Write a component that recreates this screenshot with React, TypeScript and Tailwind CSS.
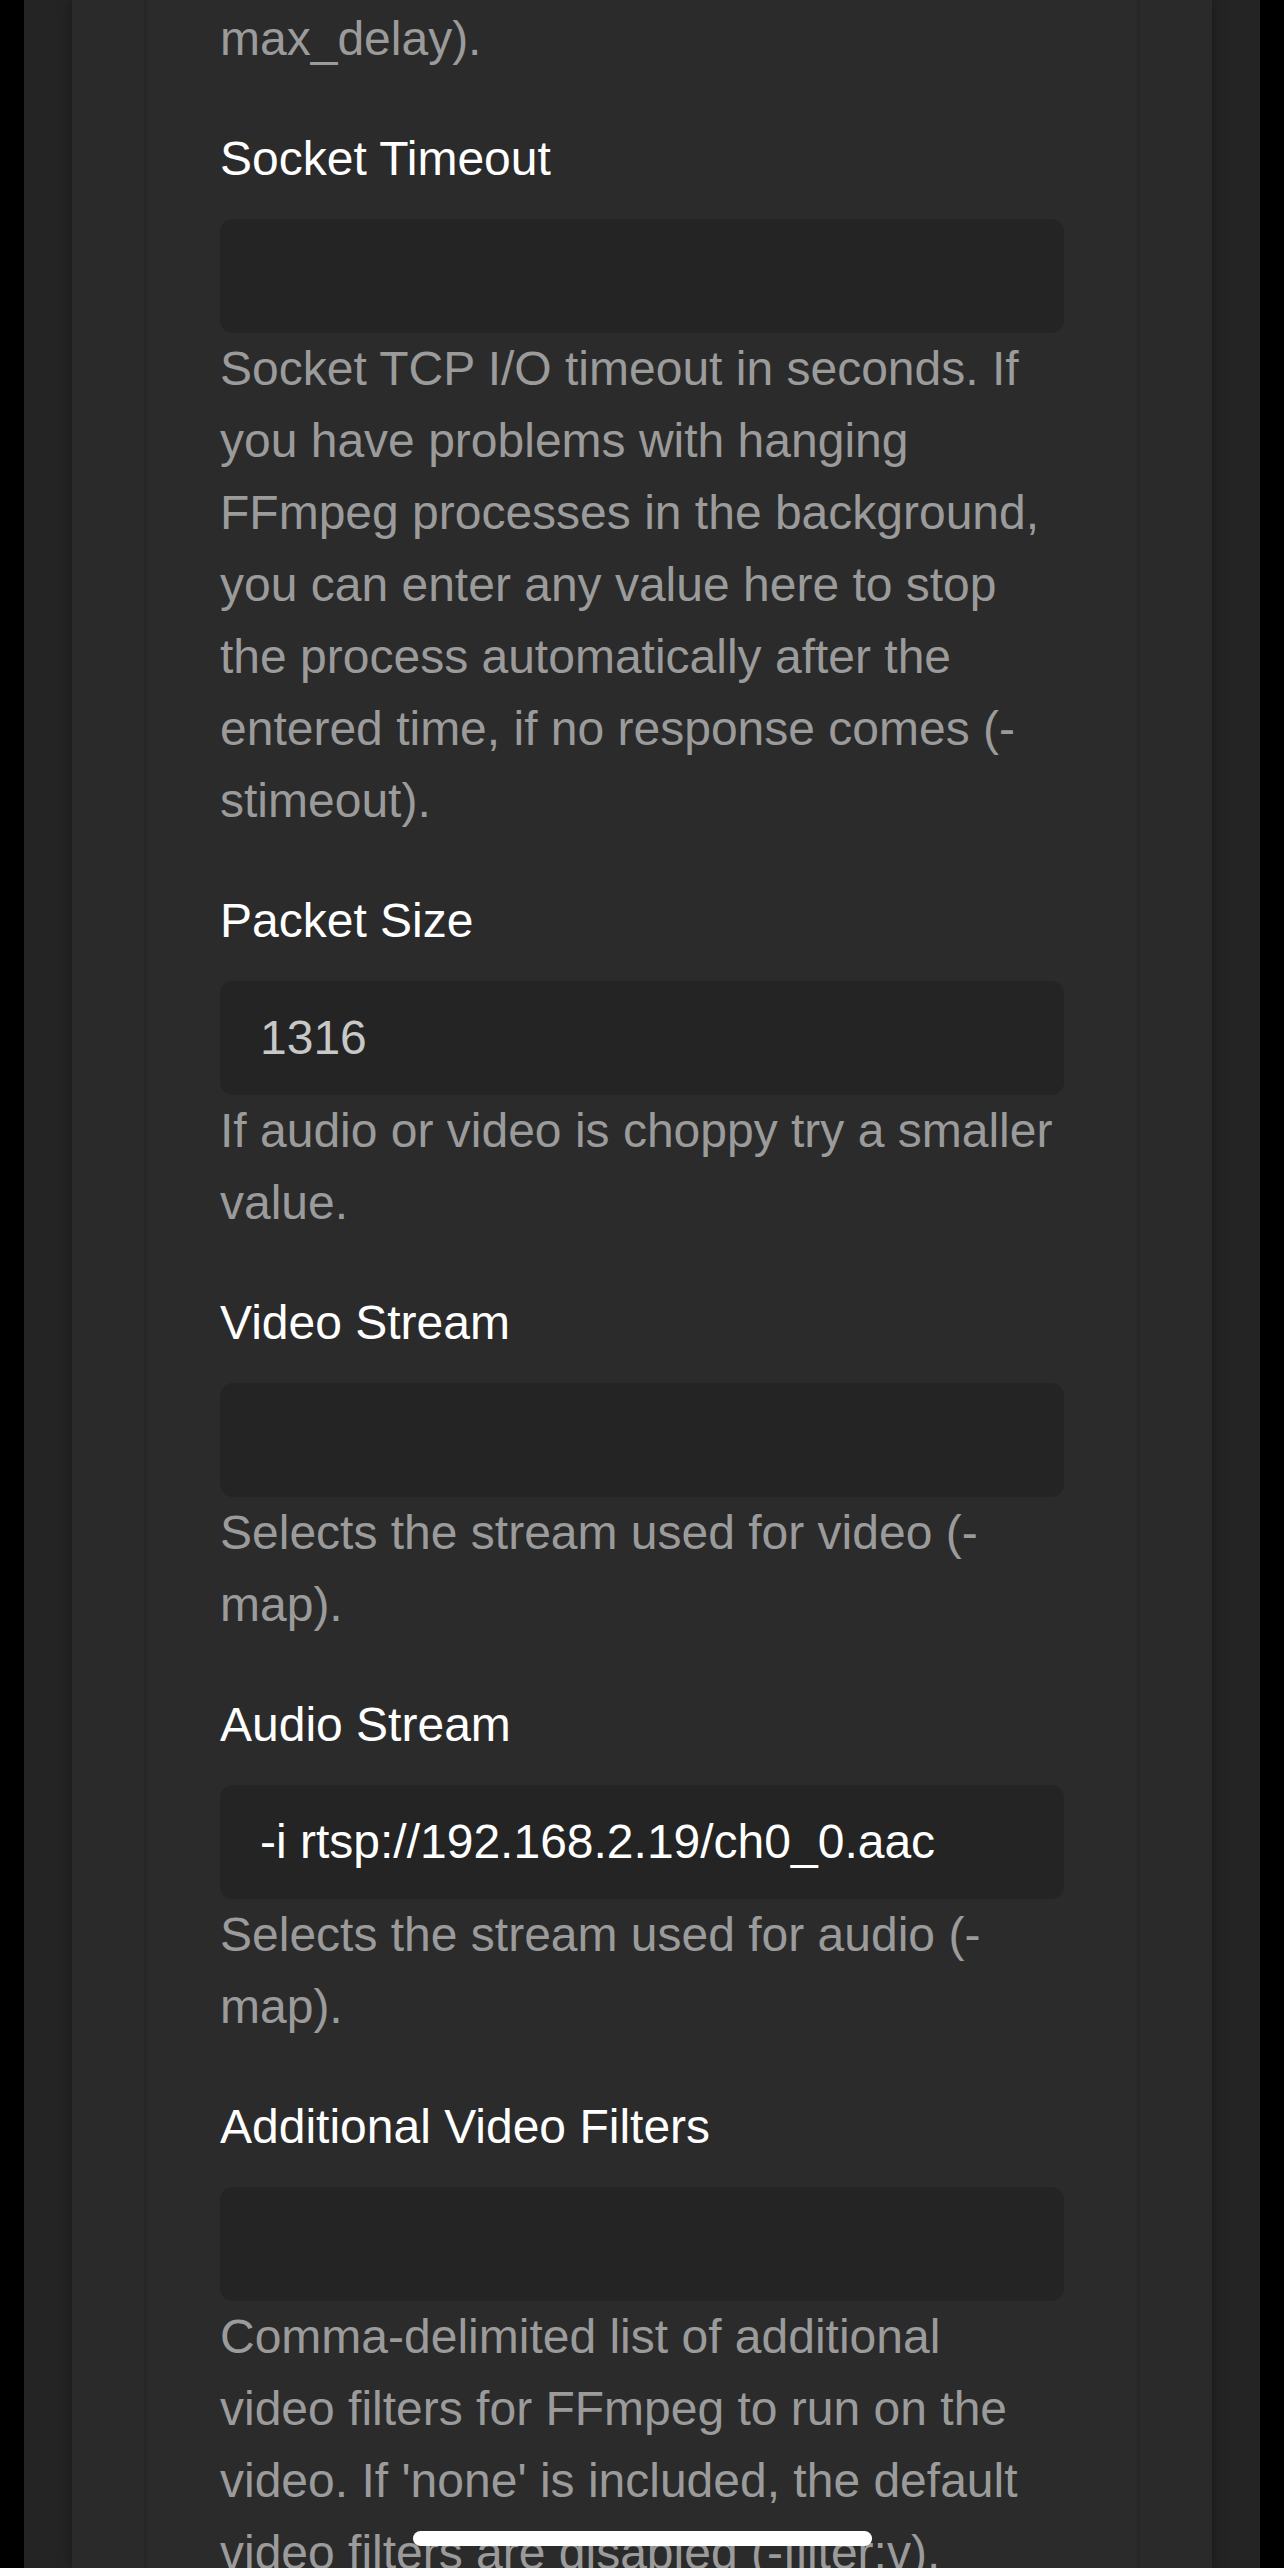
import React from 'react';

interface FieldProps {
  label: string;
  value?: string;
  valueClass?: string;
  lines: string[];
}

const Field: React.FC<FieldProps> = ({ label, value, valueClass, lines }) => (
  <div className="mt-[48px]">
    <label className="block text-white">{label}</label>
    <div className="mt-[24px] h-[114px] rounded-[13px] bg-[#242424] px-[40px] flex items-center">
      {value && <span className={valueClass}>{value}</span>}
    </div>
    <p className="text-[#9b9b9b]">
      {lines.map((l, i) => (
        <span key={i} className="block whitespace-nowrap">{l}</span>
      ))}
    </p>
  </div>
);

export default function App() {
  return (
    <div
      className="relative h-[2568px] w-[1284px] overflow-hidden bg-black px-[24px] text-[48px] leading-[72px]"
      style={{ fontFamily: '"Liberation Sans", Arial, Helvetica, sans-serif' }}
    >
      <div className="h-full bg-[#242424] px-[48px]">
        <div className="h-full bg-[#2a2a2a] px-[72px] shadow-[0_0_14px_rgba(0,0,0,0.35)]">
          <div className="h-full border-x-[3px] border-[#262626] bg-[#2b2b2b] px-[73px] pt-[3px]">
            <p className="text-[#9b9b9b]">max_delay).</p>

            <Field
              label="Socket Timeout"
              lines={[
                'Socket TCP I/O timeout in seconds. If',
                'you have problems with hanging',
                'FFmpeg processes in the background,',
                'you can enter any value here to stop',
                'the process automatically after the',
                'entered time, if no response comes (-',
                'stimeout).',
              ]}
            />
            <Field
              label="Packet Size"
              value="1316"
              valueClass="text-[#c8c8c8]"
              lines={['If audio or video is choppy try a smaller', 'value.']}
            />
            <Field
              label="Video Stream"
              lines={['Selects the stream used for video (-', 'map).']}
            />
            <Field
              label="Audio Stream"
              value="-i rtsp://192.168.2.19/ch0_0.aac"
              valueClass="text-white"
              lines={['Selects the stream used for audio (-', 'map).']}
            />
            <Field
              label="Additional Video Filters"
              lines={[
                'Comma-delimited list of additional',
                'video filters for FFmpeg to run on the',
                "video. If 'none' is included, the default",
                'video filters are disabled (-filter:v).',
              ]}
            />
          </div>
        </div>
      </div>

      {/* home indicator */}
      <div className="absolute left-[413px] top-[2531px] h-[15px] w-[459px] rounded-full bg-white" />
    </div>
  );
}
